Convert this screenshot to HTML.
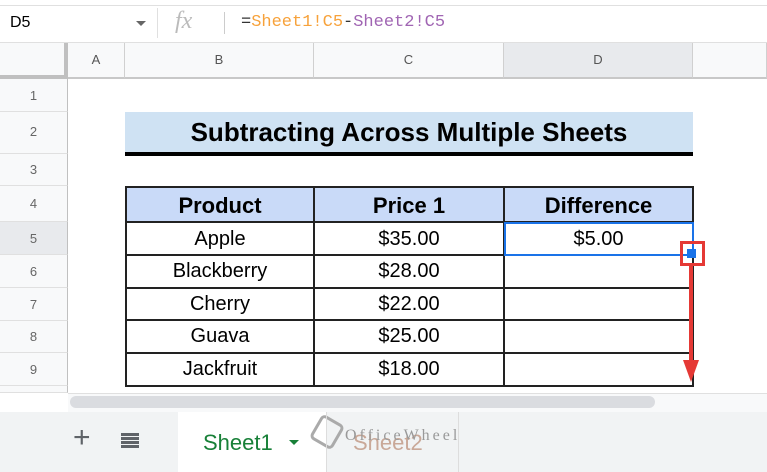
<!DOCTYPE html><html><head><style>
body{margin:0;width:767px;height:472px;overflow:hidden;background:#fff;font-family:"Liberation Sans",Arial,sans-serif;position:relative}
div{position:absolute;box-sizing:border-box}
.rh{left:0;width:68px;background:#f8f9fa;border-bottom:1px solid #e0e0e0;border-right:1px solid #c0c0c0;color:#666;font-size:13px;text-align:center}
.ch{top:43px;height:36px;background:#f8f9fa;border-right:1px solid #d0d0d0;border-bottom:2px solid #c8c8c8;color:#555;font-size:13px;text-align:center;line-height:34px}
.c{font-size:20px;text-align:center;color:#000;border-right:2px solid #222;border-bottom:2px solid #222;white-space:nowrap}
.h{background:#c9daf8;font-weight:bold;font-size:22px;line-height:36px;border-top:2px solid #222}
</style></head><body>
<div style="left:0;top:0;width:767px;height:6px;background:#fff;border-bottom:1px solid #e0e0e0"></div>
<div style="left:0;top:6px;width:767px;height:37px;border-bottom:1px solid #e0e0e0"></div>
<div style="left:10px;top:14px;font-size:16px;color:#000">D5</div>
<div style="left:136px;top:21px;width:0;height:0;border-left:5px solid transparent;border-right:5px solid transparent;border-top:5px solid #666"></div>
<div style="left:157px;top:8px;width:1px;height:30px;background:#e0e0e0"></div>
<div style="left:175px;top:8px;font-family:'Liberation Serif',serif;font-style:italic;font-size:24px;color:#bbb">fx</div>
<div style="left:224px;top:12px;width:1px;height:22px;background:#ccc"></div>
<div style="left:241px;top:13px;font-family:'Liberation Mono',monospace;font-size:17px;color:#333">=<span style="color:#f7a23b">Sheet1!C5</span>-<span style="color:#a065b3">Sheet2!C5</span></div>
<div style="left:0;top:43px;width:68px;height:36px;background:#f8f9fa;border-right:4px solid #c0c0c0;border-bottom:4px solid #c0c0c0"></div>
<div class="ch" style="left:68px;width:57px">A</div>
<div class="ch" style="left:125px;width:189px">B</div>
<div class="ch" style="left:314px;width:190px">C</div>
<div class="ch" style="left:504px;width:189px;background:#e8eaed">D</div>
<div class="ch" style="left:693px;width:74px"></div>
<div class="rh" style="top:79px;height:33px;line-height:33px">1</div>
<div class="rh" style="top:112px;height:42px;line-height:40px">2</div>
<div class="rh" style="top:154px;height:32px;line-height:32px">3</div>
<div class="rh" style="top:186px;height:36px;line-height:36px">4</div>
<div class="rh" style="top:222px;height:33px;line-height:33px;background:#e8eaed">5</div>
<div class="rh" style="top:255px;height:33px;line-height:33px">6</div>
<div class="rh" style="top:288px;height:33px;line-height:33px">7</div>
<div class="rh" style="top:321px;height:32px;line-height:32px">8</div>
<div class="rh" style="top:353px;height:33px;line-height:33px">9</div>
<div class="rh" style="top:386px;height:7px"></div>
<div style="left:125px;top:112px;width:568px;height:40px;background:#cfe2f3;font-weight:bold;font-size:26px;text-align:center;line-height:40px">Subtracting Across Multiple Sheets</div>
<div style="left:125px;top:152px;width:568px;height:4px;background:#000"></div>
<div class="c h" style="left:125px;top:186px;width:190px;height:37px;border-left:2px solid #222">Product</div>
<div class="c h" style="left:315px;top:186px;width:190px;height:37px">Price 1</div>
<div class="c h" style="left:505px;top:186px;width:189px;height:37px">Difference</div>
<div class="c" style="left:125px;top:223px;width:190px;height:33px;line-height:33px;border-left:2px solid #222">Apple</div>
<div class="c" style="left:315px;top:223px;width:190px;height:33px;line-height:33px">$35.00</div>
<div class="c" style="left:505px;top:223px;width:189px;height:33px;line-height:33px">$5.00</div>
<div class="c" style="left:125px;top:256px;width:190px;height:33px;line-height:31px;border-left:2px solid #222">Blackberry</div>
<div class="c" style="left:315px;top:256px;width:190px;height:33px;line-height:31px">$28.00</div>
<div class="c" style="left:505px;top:256px;width:189px;height:33px"></div>
<div class="c" style="left:125px;top:289px;width:190px;height:32px;line-height:31px;border-left:2px solid #222">Cherry</div>
<div class="c" style="left:315px;top:289px;width:190px;height:32px;line-height:31px">$22.00</div>
<div class="c" style="left:505px;top:289px;width:189px;height:32px"></div>
<div class="c" style="left:125px;top:321px;width:190px;height:33px;line-height:31px;border-left:2px solid #222">Guava</div>
<div class="c" style="left:315px;top:321px;width:190px;height:33px;line-height:31px">$25.00</div>
<div class="c" style="left:505px;top:321px;width:189px;height:33px"></div>
<div class="c" style="left:125px;top:354px;width:190px;height:33px;line-height:31px;border-left:2px solid #222">Jackfruit</div>
<div class="c" style="left:315px;top:354px;width:190px;height:33px;line-height:31px">$18.00</div>
<div class="c" style="left:505px;top:354px;width:189px;height:33px"></div>
<div style="left:504px;top:222px;width:190px;height:34px;border:2px solid #1a73e8"></div>
<div style="left:680px;top:241px;width:25px;height:25px;border:3px solid #e53935"></div>
<div style="left:687px;top:249px;width:9px;height:9px;background:#1a73e8"></div>
<div style="left:689px;top:266px;width:4px;height:100px;background:#e53935"></div>
<div style="left:683px;top:360px;width:0;height:0;border-left:8px solid transparent;border-right:8px solid transparent;border-top:22px solid #e53935"></div>
<div style="left:68px;top:393px;width:699px;height:19px;background:#f8f9fa;border-top:1px solid #e0e0e0"></div>
<div style="left:70px;top:396px;width:585px;height:12px;background:#dadce0;border-radius:6px"></div>
<div style="left:0;top:412px;width:767px;height:60px;background:#f1f3f4"></div>
<div style="left:73px;top:421px;font-size:30px;color:#5f6368">+</div>
<div style="left:121px;top:433px;width:18px;height:3px;background:#5f6368;box-shadow:0 4px 0 #5f6368,0 8px 0 #5f6368,0 12px 0 #5f6368"></div>
<div style="left:178px;top:412px;width:148px;height:60px;background:#fff"></div>
<div style="left:203px;top:430px;font-size:22px;color:#188038">Sheet1</div>
<div style="left:289px;top:440px;width:0;height:0;border-left:5px solid transparent;border-right:5px solid transparent;border-top:5px solid #188038"></div>
<div style="left:353px;top:430px;font-size:22px;color:#c9a898">Sheet2</div>
<div style="left:345px;top:427px;font-family:'Liberation Serif',serif;font-size:16px;letter-spacing:3px;color:#999">OfficeWheel</div>
<div style="left:314px;top:418px;width:26px;height:28px;border:3px solid #aaa;border-radius:5px;transform:rotate(30deg)"></div>
<div style="left:326px;top:412px;width:1px;height:60px;background:#ddd"></div>
<div style="left:458px;top:412px;width:1px;height:60px;background:#ddd"></div>
</body></html>
